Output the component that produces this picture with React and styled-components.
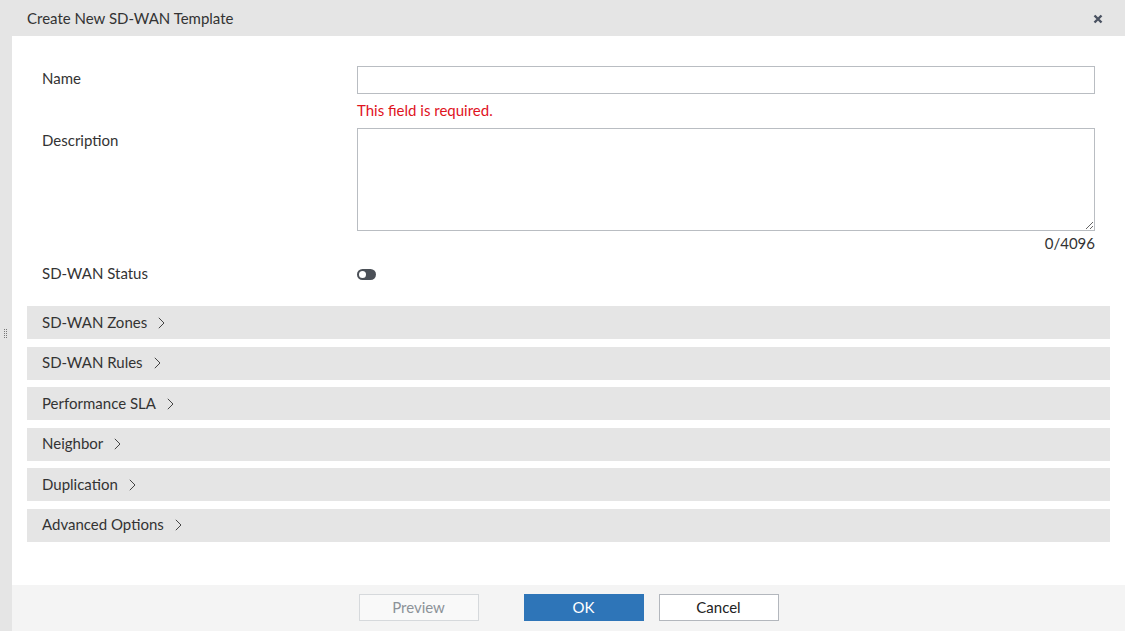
import React from "react";
import styled, { createGlobalStyle } from "styled-components";

const Global = createGlobalStyle`
  html, body { margin: 0; padding: 0; }
  body { font-family: Lato, "Open Sans", sans-serif; color: #333; background: #fff; }
  * { box-sizing: border-box; }
`;

const Dialog = styled.div`
  width: 1125px;
  height: 631px;
  display: flex;
  flex-direction: column;
  overflow: hidden;
`;

const Header = styled.div`
  height: 36px;
  flex: none;
  background: #e5e5e5;
  display: flex;
  align-items: center;
  justify-content: space-between;
  padding: 0 21px 0 27px;
  font-size: 15px;
  color: #333;
  span { margin-top: -1px; }
`;

const Close = styled.button`
  border: 0;
  background: none;
  padding: 0;
  width: 12px;
  height: 12px;
  display: flex;
  align-items: center;
  justify-content: center;
  cursor: pointer;
  margin-top: 2px;
`;

const Main = styled.div`
  flex: 1;
  display: flex;
  min-height: 0;
`;

const Strip = styled.div`
  width: 12px;
  flex: none;
  background: #e5e5e5;
  display: flex;
  align-items: center;
  justify-content: center;
`;

const Grip = styled.div`
  display: grid;
  grid-template-columns: repeat(2, 1px);
  gap: 1px;
  margin-left: -1px;
  span { width: 1px; height: 1px; background: #777; }
`;

const Panel = styled.div`
  flex: 1;
  display: flex;
  flex-direction: column;
`;

const Body = styled.div`
  flex: 1;
  padding: 30px 15px 0 15px;
  background: #fff;
`;

const Row = styled.div`
  display: grid;
  grid-template-columns: 315px 1fr;
  padding: 0 15px;
  margin-top: ${p => p.$mt || 0}px;
`;

const Label = styled.div`
  font-size: 15px;
  line-height: 24px;
  color: #333;
`;

const Field = styled.div`
  display: flex;
  flex-direction: column;
`;

const Input = styled.input`
  height: 28px;
  border: 1px solid #b9bdc2;
  border-radius: 0;
  outline: none;
  font: inherit;
  font-size: 15px;
  padding: 0 8px;
`;

const TextArea = styled.textarea`
  height: 103px;
  border: 1px solid #b9bdc2;
  border-radius: 0;
  outline: none;
  font: inherit;
  font-size: 15px;
  padding: 6px 8px;
  resize: vertical;
`;

const Error = styled.div`
  margin-top: 8px;
  font-size: 15px;
  line-height: 17px;
  color: #e0131e;
`;

const Counter = styled.div`
  margin-top: 3px;
  font-size: 15px;
  line-height: 18px;
  text-align: right;
  color: #333;
`;

const ToggleWrap = styled.div`
  height: 24px;
  display: flex;
  align-items: center;
  padding-top: 2px;
`;

const Toggle = styled.div`
  width: 19px;
  height: 11px;
  border-radius: 6px;
  background: #4b5057;
  position: relative;
  &::after {
    content: "";
    position: absolute;
    left: 2px;
    top: 2px;
    width: 7px;
    height: 7px;
    border-radius: 50%;
    background: #fff;
  }
`;

const Sections = styled.div`
  margin-top: 21px;
  display: flex;
  flex-direction: column;
  gap: 7.5px;
`;

const Bar = styled.div`
  height: 33px;
  background: #e5e5e5;
  display: flex;
  align-items: center;
  padding-left: 15px;
  padding-bottom: 2px;
  font-size: 15px;
  color: #333;
  cursor: pointer;
  svg { margin-left: 11px; margin-top: 2px; }
`;

const Footer = styled.div`
  height: 46px;
  flex: none;
  background: #f4f4f4;
  display: flex;
  align-items: center;
  justify-content: center;
  padding-bottom: 1px;
`;

const Button = styled.button`
  width: 120px;
  height: 27px;
  font: inherit;
  font-size: 15px;
  border-radius: 0;
  padding: 0 0 2px;
  margin-left: ${p => p.$ml || 0}px;
  border: 1px solid ${p => (p.$variant === "primary" ? "#2e75b8" : p.$variant === "disabled" ? "#d6d9dc" : "#b3b7bd")};
  background: ${p => (p.$variant === "primary" ? "#2e75b8" : p.$variant === "disabled" ? "#f9f9f9" : "#fff")};
  color: ${p => (p.$variant === "primary" ? "#fff" : p.$variant === "disabled" ? "#8c9298" : "#222")};
  cursor: ${p => (p.$variant === "disabled" ? "default" : "pointer")};
`;

const Chevron = () => (
  <svg width="7" height="12" viewBox="0 0 7 12" fill="none">
    <path d="M0.8 0.8 L6 6 L0.8 11.2" stroke="#444" strokeWidth="1" />
  </svg>
);

const sections = ["SD-WAN Zones", "SD-WAN Rules", "Performance SLA", "Neighbor", "Duplication", "Advanced Options"];

export default function App() {
  return (
    <>
      <Global />
      <Dialog>
        <Header>
          <span>Create New SD-WAN Template</span>
          <Close aria-label="close">
            <svg width="10" height="10" viewBox="0 0 10 10">
              <path d="M1.5 1.5 L8.5 8.5 M8.5 1.5 L1.5 8.5" stroke="#4a5261" strokeWidth="2.4" strokeLinecap="butt" />
            </svg>
          </Close>
        </Header>
        <Main>
          <Strip>
            <Grip>
              {Array.from({ length: 10 }).map((_, i) => <span key={i} />)}
            </Grip>
          </Strip>
          <Panel>
            <Body>
              <Row>
                <Label>Name</Label>
                <Field>
                  <Input />
                  <Error>This field is required.</Error>
                </Field>
              </Row>
              <Row $mt={9}>
                <Label>Description</Label>
                <Field>
                  <TextArea />
                  <Counter>0/4096</Counter>
                </Field>
              </Row>
              <Row $mt={9}>
                <Label>SD-WAN Status</Label>
                <ToggleWrap>
                  <Toggle />
                </ToggleWrap>
              </Row>
              <Sections>
                {sections.map(s => (
                  <Bar key={s}>
                    {s}
                    <Chevron />
                  </Bar>
                ))}
              </Sections>
            </Body>
            <Footer>
              <Button $variant="disabled">Preview</Button>
              <Button $variant="primary" $ml={45}>OK</Button>
              <Button $ml={15}>Cancel</Button>
            </Footer>
          </Panel>
        </Main>
      </Dialog>
    </>
  );
}
